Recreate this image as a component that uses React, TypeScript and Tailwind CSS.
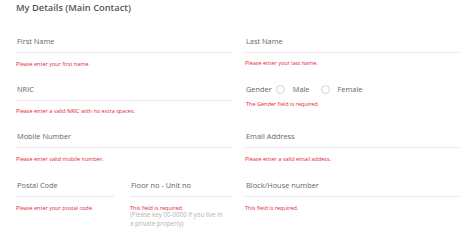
import React from "react";

const font = { fontFamily: '"Open Sans", "Liberation Sans", sans-serif' };

function Field({ label }: { label: string }) {
  return (
    <div className="h-[21px] flex items-center pl-[1px] border-b border-[#e8e8e8] text-[7.4px] text-[#666]">
      {label}
    </div>
  );
}

function Err({ children, cls = "mt-[7px] leading-[8px]" }: { children: React.ReactNode; cls?: string }) {
  return <div className={`${cls} text-[5.5px] text-[#e21d35]`}>{children}</div>;
}

function Radio({ label }: { label: string }) {
  return (
    <div className="flex items-center">
      <span className="w-[9px] h-[9px] rounded-full border border-[#d4d4d4] bg-white mr-[8px]" />
      <span>{label}</span>
    </div>
  );
}

export default function App() {
  return (
    <div style={font} className="w-[474px] h-[242px] bg-white pl-4 pr-[15px] overflow-hidden">
      <div className="h-[32px] pt-[1px] leading-[14px] text-[9.3px] font-semibold text-[#555]">
        My Details (Main Contact)
      </div>
      <div className="grid grid-cols-[215px_214px] grid-rows-[48px_47px_49px_66px] gap-x-[14px]">
        <div>
          <Field label="First Name" />
          <Err cls="mt-[7px] leading-[8px]">Please enter your first name.</Err>
        </div>
        <div>
          <Field label="Last Name" />
          <Err cls="mt-[6px] leading-[8px]">Please enter your last name.</Err>
        </div>

        <div>
          <Field label="NRIC" />
          <Err cls="mt-[6px] leading-[8px]">Please enter a valid NRIC with no extra spaces.</Err>
        </div>
        <div>
          <div className="h-[20px] flex items-center pl-[1px] text-[7.4px] text-[#666] gap-[4px]">
            <span>Gender</span>
            <div className="flex items-center gap-[11px]">
              <Radio label="Male" />
              <Radio label="Female" />
            </div>
          </div>
          <Err cls="mt-0 leading-[8px] pl-[1px]">The Gender field is required.</Err>
        </div>

        <div>
          <Field label="Mobile Number" />
          <Err cls="mt-[7px] leading-[8px]">Please enter valid mobile number.</Err>
        </div>
        <div>
          <Field label="Email Address" />
          <Err cls="mt-[7px] leading-[8px]">Please enter a valid email addess.</Err>
        </div>

        <div className="grid grid-cols-[98px_101px] gap-x-[16px]">
          <div>
            <Field label="Postal Code" />
            <Err cls="mt-[7px] leading-[8px]">Please enter your postal code.</Err>
          </div>
          <div>
            <Field label="Floor no - Unit no" />
            <Err cls="mt-[8px] leading-[6px]">This field is required.</Err>
            <div className="mt-0 leading-[8.5px] text-[6.2px] text-[#b3b3b3] whitespace-nowrap">
              (Please key 00-0000 if you live in
              <br />
              a private property)
            </div>
          </div>
        </div>
        <div>
          <Field label="Block/House number" />
          <Err cls="mt-[7px] leading-[8px]">This field is required.</Err>
        </div>
      </div>
    </div>
  );
}
